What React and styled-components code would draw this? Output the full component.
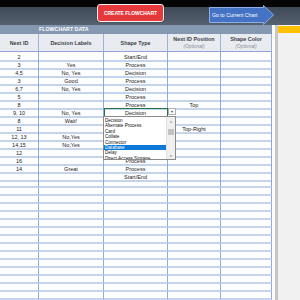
import React from 'react'
import styled, { createGlobalStyle } from 'styled-components'

const Global = createGlobalStyle`
  html, body { margin: 0; padding: 0; background: #fff; overflow: hidden; }
  body { font-family: "Liberation Sans", Arial, sans-serif; }
`

const COLS = '39px 65px 64px 53px 51px'

const rows = [
  ['2', '', 'Start/End'],
  ['3', 'Yes', 'Process'],
  ['4,5', 'No, Yes', 'Decision'],
  ['3', 'Good', 'Process'],
  ['6,7', 'No, Yes', 'Decision'],
  ['5', '', 'Process'],
  ['8', '', 'Process', 'Top'],
  ['9, 10', 'No, Yes', 'Decision'],
  ['8', 'Wait!', ''],
  ['11', '', '', 'Top-Right'],
  ['12, 13', 'No,Yes', ''],
  ['14,15', 'No,Yes', ''],
  ['12', '', ''],
  ['16', '', 'Process'],
  ['14', 'Great', 'Process'],
  ['', '', 'Start/End'],
]
while (rows.length < 32) rows.push(['', '', ''])

const options = ['Decision', 'Alternate Process', 'Card', 'Collate', 'Connector', 'Database', 'Delay', 'Direct Access Storage']

const Page = styled.div`
  width: 300px;
  height: 300px;
  overflow: hidden;
  display: flex;
  flex-direction: column;
`

const TopBar = styled.div`
  height: 25px;
  flex: none;
  display: flex;
  align-items: flex-start;
  padding: 4px 0 0 97px;
  gap: 45px;
  box-sizing: border-box;
  background: linear-gradient(#050505 0, #050505 7px, #3f4957 7px, #566170 25px);
`

const RedButton = styled.div`
  width: 67px;
  height: 18px;
  box-sizing: border-box;
  border: 1px solid #f4f4f4;
  border-radius: 3px;
  background: #e6393c;
  box-shadow: 0 0 1px #000;
  color: #fff;
  font-size: 5px;
  font-weight: bold;
  display: flex;
  align-items: center;
  justify-content: center;
  letter-spacing: -0.05px;
`

const ArrowButton = styled.div`
  position: relative;
  width: 65px;
  height: 20px;
  margin-top: 1px;
  color: #fff;
  font-size: 5.2px;
  display: flex;
  align-items: center;
  padding-left: 3px;
  box-sizing: border-box;
  svg { position: absolute; left: 0; top: 0; }
  span { position: relative; }
`

const Body = styled.div`
  flex: 1;
  display: flex;
  min-height: 0;
`

const Sheet = styled.div`
  width: 272px;
  flex: none;
  position: relative;
  display: flex;
  flex-direction: column;
`

const TitleBand = styled.div`
  height: 9px;
  background: #8598b1;
  color: #fff;
  font-size: 5.3px;
  font-weight: bold;
  line-height: 9px;
  padding-left: 39px;
`

const Grid = styled.div`
  display: grid;
  grid-template-columns: ${COLS};
  height: ${p => p.$h}px;
  flex: none;
`

const HeadCell = styled.div`
  background: #e8ebf0;
  border-right: 1px solid #9fb2d6;
  border-bottom: 1px solid #8fa7d6;
  color: #3b3f46;
  font-size: 5.4px;
  font-weight: bold;
  display: flex;
  flex-direction: column;
  align-items: center;
  justify-content: center;
  line-height: 7px;
  padding-top: 1px;
  em { font-weight: normal; color: #8a8f98; font-size: 4.8px; }
`

const Cell = styled.div`
  position: relative;
  box-sizing: border-box;
  border-right: 1px solid #8eaadc;
  border-bottom: 2px solid #c4d3ee;
  padding-top: 2px;
  font-size: 5.5px;
  color: #1a1a1a;
  display: flex;
  align-items: center;
  justify-content: center;
  white-space: nowrap;
  ${p => p.$selected && `
    outline: 1px solid #217346;
    outline-offset: -1px;
    z-index: 1;
  `}
`

const DropArrow = styled.div`
  position: absolute;
  right: -9px;
  top: 0;
  width: 8px;
  height: 7px;
  background: #fff;
  border: 1px solid #b0b0b0;
  box-sizing: border-box;
  font-size: 4px;
  color: #444;
  display: flex;
  align-items: center;
  justify-content: center;
`

const DropList = styled.div`
  position: absolute;
  left: 103px;
  top: 91px;
  width: 73px;
  height: 44px;
  background: #fff;
  border: 1px solid #8a8a8a;
  box-sizing: border-box;
  z-index: 2;
  display: flex;
  overflow: hidden;
`

const Items = styled.div`
  flex: 1;
  padding-top: 1px;
  min-width: 0;
  overflow: hidden;
`

const Item = styled.div`
  height: 5.4px;
  line-height: 5.4px;
  font-size: 4.6px;
  padding-left: 1px;
  white-space: nowrap;
  overflow: hidden;
  color: ${p => (p.$active ? '#fff' : '#111')};
  background: ${p => (p.$active ? '#0a78d7' : 'transparent')};
`

const ScrollBar = styled.div`
  width: 9px;
  flex: none;
  background: #f0f0f0;
  border-left: 1px solid #e0e0e0;
  display: flex;
  flex-direction: column;
  align-items: center;
  font-size: 4px;
  color: #555;
  padding: 2px 0 1px;
  box-sizing: border-box;
  justify-content: space-between;
`

const Thumb = styled.div`
  width: 6px;
  height: 6px;
  background: #c2c2c2;
  margin-top: -14px;
`

const Side = styled.div`
  flex: 1;
  background: #f1f1f1;
  border-left: 3px solid #fafafa;
  position: relative;
  &::before {
    content: '';
    position: absolute;
    left: 0; top: 0; bottom: 0;
    width: 3px;
    background: #c6c6c6;
  }
`

const YellowBar = styled.div`
  margin: 1px 0 0 3px;
  height: 7px;
  background: #ffc000;
`

export default function App() {
  return (
    <Page>
      <Global />
      <TopBar>
        <RedButton>CREATE FLOWCHART</RedButton>
        <ArrowButton>
          <svg width="65" height="20" viewBox="0 0 65 20">
            <path d="M0.5 2.5 H54.5 V0.5 L64.5 10 L54.5 19.5 V17.5 H0.5 Z" fill="#4472c4" stroke="#8fb0e6" strokeWidth="1" />
          </svg>
          <span>Go to Current Chart</span>
        </ArrowButton>
      </TopBar>
      <Body>
        <Sheet>
          <TitleBand>FLOWCHART DATA</TitleBand>
          <Grid $h={18}>
            <HeadCell>Next ID</HeadCell>
            <HeadCell>Decision Labels</HeadCell>
            <HeadCell>Shape Type</HeadCell>
            <HeadCell>Next ID Position<em>(Optional)</em></HeadCell>
            <HeadCell>Shape Color<em>(Optional)</em></HeadCell>
          </Grid>
          {rows.map((r, i) => (
            <Grid $h={8} key={i}>
              <Cell>{r[0]}</Cell>
              <Cell>{r[1]}</Cell>
              <Cell $selected={i === 7}>
                {r[2]}
                {i === 7 && <DropArrow>▾</DropArrow>}
              </Cell>
              <Cell>{r[3] || ''}</Cell>
              <Cell>{r[4] || ''}</Cell>
            </Grid>
          ))}
          <DropList>
            <Items>
              {options.map(o => (
                <Item key={o} $active={o === 'Database'}>{o}</Item>
              ))}
            </Items>
            <ScrollBar>
              <span>˄</span>
              <Thumb />
              <span>˅</span>
            </ScrollBar>
          </DropList>
        </Sheet>
        <Side>
          <YellowBar />
        </Side>
      </Body>
    </Page>
  )
}
